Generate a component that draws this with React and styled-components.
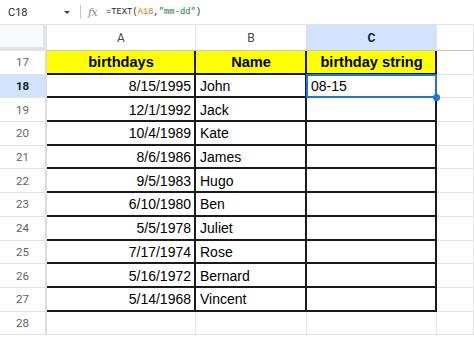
import React from "react";
import styled, { createGlobalStyle, css } from "styled-components";

const Global = createGlobalStyle`
  html, body { margin: 0; padding: 0; background: #fff; }
  body { font-family: "Liberation Sans", Arial, sans-serif; }
`;

const Page = styled.div`
  width: 474px;
  height: 343px;
  overflow: hidden;
  background: #fff;
`;

const FormulaBar = styled.div`
  height: 25px;
  box-sizing: border-box;
  border-bottom: 1px solid #e1e3e6;
  display: flex;
  align-items: center;
  font-family: "Roboto", "Liberation Sans", sans-serif;
`;

const NameBox = styled.div`
  width: 56px;
  padding-left: 8px;
  font-size: 11px;
  color: #1f1f1f;
`;

const Caret = styled.div`
  width: 0;
  height: 0;
  border-left: 3px solid transparent;
  border-right: 3px solid transparent;
  border-top: 3px solid #444;
  margin-right: 10px;
`;

const Divider = styled.div`
  width: 1px;
  height: 14px;
  background: #c7c7c7;
  margin-right: 7px;
`;

const Fx = styled.div`
  font-family: "DejaVu Serif", "Liberation Serif", serif;
  font-style: italic;
  font-size: 11px;
  color: #8a8a8a;
  width: 18px;
  letter-spacing: -0.5px;
`;

const Formula = styled.div`
  font-family: "Liberation Mono", "DejaVu Sans Mono", monospace;
  font-size: 8.8px;
  color: #1f1f1f;
  white-space: pre;
`;

const Ref = styled.span`
  color: #e37400;
`;

const Str = styled.span`
  color: #188038;
`;

const Grid = styled.div`
  display: grid;
  grid-template-columns: 47px 149px 111px 130px 1fr;
  grid-template-rows: 26px repeat(12, 23.7px);
`;

const Corner = styled.div`
  box-sizing: border-box;
  background: #f8f9fa;
  border-right: 4px solid #e1e3e6;
  border-bottom: 4px solid #e1e3e6;
`;

const ColHead = styled.div`
  box-sizing: border-box;
  display: flex;
  align-items: center;
  justify-content: center;
  font-family: "Roboto", "Liberation Sans", sans-serif;
  font-size: 12px;
  color: #444746;
  background: ${(p) => (p.$active ? "#d3e3fd" : "#fff")};
  font-weight: ${(p) => (p.$active ? 700 : 400)};
  ${(p) => p.$active && "color: #0b1e3f;"}
  border-right: 1px solid #e1e3e6;
  border-bottom: 1px solid #c4c7c5;
`;

const RowHead = styled.div`
  box-sizing: border-box;
  display: flex;
  align-items: center;
  justify-content: center;
  font-family: "Roboto", "Liberation Sans", sans-serif;
  font-size: 11.5px;
  color: ${(p) => (p.$active ? "#0b1e3f" : "#5f6368")};
  font-weight: ${(p) => (p.$active ? 700 : 400)};
  background: ${(p) => (p.$active ? "#d3e3fd" : "#fff")};
  border-right: 2px solid #dadce0;
  border-bottom: 1px solid #e1e3e6;
`;

const Cell = styled.div`
  position: relative;
  box-sizing: border-box;
  display: flex;
  align-items: center;
  padding: 1px 3px 0 4px;
  font-size: 14px;
  color: #000;
  white-space: nowrap;
  overflow: visible;
  border-right: 1px solid #e1e3e6;
  border-bottom: 1px solid #e1e3e6;
  justify-content: ${(p) =>
    p.$align === "right" ? "flex-end" : p.$align === "center" ? "center" : "flex-start"};
  ${(p) =>
    p.$boxed &&
    css`
      border-right: 2px solid #1b1b1b;
      border-bottom: 2px solid #1b1b1b;
    `}
  ${(p) =>
    p.$head &&
    css`
      background: #ffff00;
      font-weight: 700;
      font-size: 14.6px;
    `}
  ${(p) =>
    p.$selected &&
    css`
      &::after {
        content: "";
        position: absolute;
        left: -1px;
        top: -1px;
        right: -2px;
        bottom: -2px;
        border: 2px solid #1a73e8;
        pointer-events: none;
      }
      &::before {
        content: "";
        position: absolute;
        right: -5px;
        bottom: -5px;
        width: 7px;
        height: 7px;
        border-radius: 50%;
        background: #1a73e8;
        z-index: 2;
      }
    `}
`;

const rows = [
  ["8/15/1995", "John", "08-15"],
  ["12/1/1992", "Jack", ""],
  ["10/4/1989", "Kate", ""],
  ["8/6/1986", "James", ""],
  ["9/5/1983", "Hugo", ""],
  ["6/10/1980", "Ben", ""],
  ["5/5/1978", "Juliet", ""],
  ["7/17/1974", "Rose", ""],
  ["5/16/1972", "Bernard", ""],
  ["5/14/1968", "Vincent", ""],
];

export default function App() {
  return (
    <Page>
      <Global />
      <FormulaBar>
        <NameBox>C18</NameBox>
        <Caret />
        <Divider />
        <Fx>fx</Fx>
        <Formula>
          =TEXT(<Ref>A18</Ref>,<Str>"mm-dd"</Str>)
        </Formula>
      </FormulaBar>
      <Grid>
        <Corner />
        <ColHead>A</ColHead>
        <ColHead>B</ColHead>
        <ColHead $active>C</ColHead>
        <ColHead />

        <RowHead>17</RowHead>
        <Cell $boxed $head $align="center">birthdays</Cell>
        <Cell $boxed $head $align="center">Name</Cell>
        <Cell $boxed $head $align="center">birthday string</Cell>
        <Cell />

        {rows.map((r, i) => {
          const n = 18 + i;
          return (
            <React.Fragment key={n}>
              <RowHead $active={n === 18}>{n}</RowHead>
              <Cell $boxed $align="right">{r[0]}</Cell>
              <Cell $boxed>{r[1]}</Cell>
              <Cell $boxed $selected={n === 18}>{r[2]}</Cell>
              <Cell />
            </React.Fragment>
          );
        })}

        <RowHead>28</RowHead>
        <Cell />
        <Cell />
        <Cell />
        <Cell />
      </Grid>
    </Page>
  );
}
